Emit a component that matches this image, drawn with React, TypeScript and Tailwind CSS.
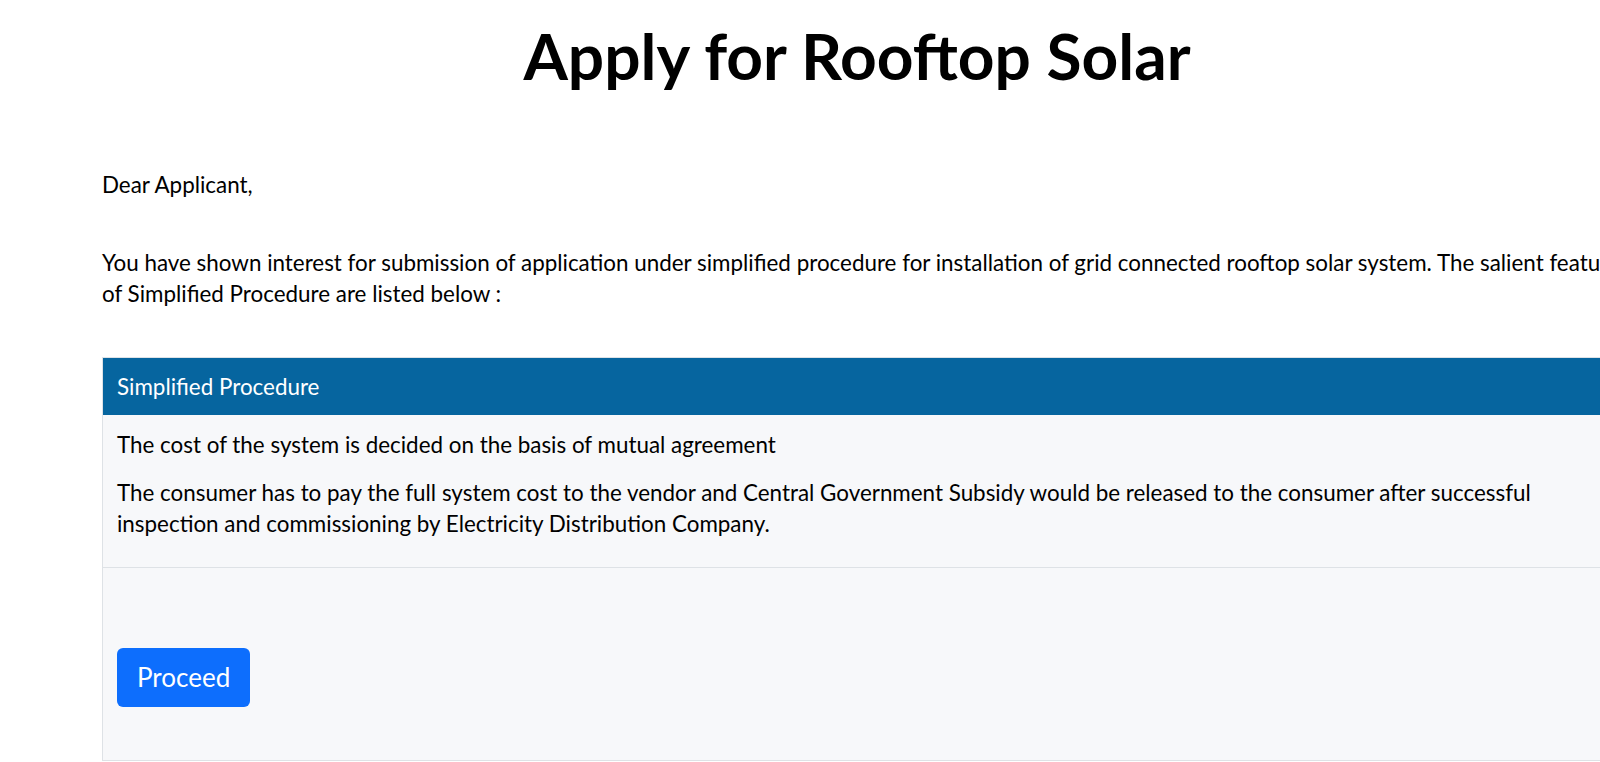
export default function App() {
  return (
    <div className="w-full h-[762px] overflow-hidden bg-white text-black font-['Lato',sans-serif]">
      <div className="ml-[102px] w-[1510px]">
        <h1 className="pt-[17px] text-center text-[64px] font-bold leading-[77px]">Apply for Rooftop Solar</h1>

        <div className="w-[1545px] text-[22.4px] leading-[31px]">
          <p className="mt-[75px]">Dear Applicant,</p>
          <p className="mt-[47px]">
            You have shown interest for submission of application under simplified procedure for installation of grid connected rooftop solar system. The salient features of Simplified Procedure are listed below :
          </p>
        </div>

        {/* Procedure card */}
        <div className="mt-[48px] w-[1500px] border border-[#dee2e6] bg-[#f7f8fa] text-[22.4px] leading-[31px]">
          <div className="bg-[#06659f] px-[14px] py-[13px] text-white">Simplified Procedure</div>
          <div className="px-[14px] pt-[14px] pb-[28px]">
            <p>The cost of the system is decided on the basis of mutual agreement</p>
            <p className="mt-[17px]">
              The consumer has to pay the full system cost to the vendor and Central Government Subsidy would be released to the consumer after successful inspection and commissioning by Electricity Distribution Company.
            </p>
          </div>
          <div className="border-t border-[#dee2e6] px-[14px] pt-[80px] pb-[53px]">
            <button className="h-[59px] rounded-[6px] bg-[#0d6efd] px-[20px] text-[26px] text-white">Proceed</button>
          </div>
        </div>
      </div>
    </div>
  );
}
